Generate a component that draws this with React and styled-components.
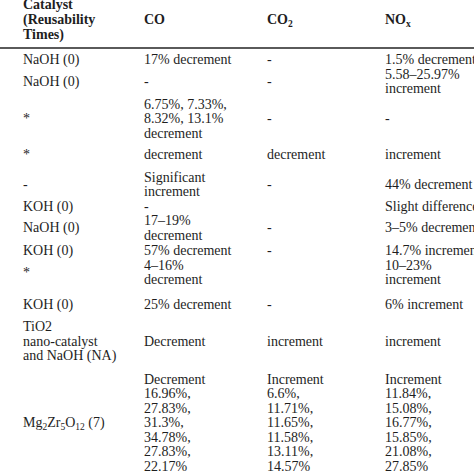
import React from "react";
import styled, { createGlobalStyle } from "styled-components";

const Global = createGlobalStyle`
  html, body {
    margin: 0;
    padding: 0;
    background: #ffffff;
    overflow: hidden;
    width: 474px;
    height: 474px;
  }
  body {
    font-family: "Liberation Serif", "Times New Roman", serif;
    color: #1e1e1e;
  }
`;

const Table = styled.div`
  display: flex;
  flex-direction: column;
  width: 474px;
  height: 474px;
  overflow: hidden;
  font-size: 14px;
  line-height: 14.5px;
`;

const HeaderRow = styled.div`
  display: grid;
  grid-template-columns: 121px 123px 118px auto;
  align-items: center;
  padding: 0 0 5px 23px;
  margin-top: -3px;
  border-bottom: 2px solid #5a5a5a;
  font-weight: bold;
  line-height: 15px;
`;

const Row = styled.div`
  display: grid;
  grid-template-columns: 121px 123px 118px auto;
  align-items: center;
  padding-left: 23px;
  margin-top: ${(p) => p.$gap}px;
`;

const Cell = styled.div`
  white-space: nowrap;
`;

const Line = styled.div`
  white-space: nowrap;
`;

const Sub = styled.sub`
  font-size: 0.68em;
  vertical-align: -0.3em;
  line-height: 0;
`;

const header = [
  ["Catalyst", "(Reusability", "Times)"],
  ["CO"],
  [<>CO<Sub>2</Sub></>],
  [<>NO<Sub>x</Sub></>],
];

const rows = [
  { gap: 4, cells: [["NaOH (0)"], ["17% decrement"], ["-"], ["1.5% decrement"]] },
  { gap: 0, cells: [["NaOH (0)"], ["-"], ["-"], ["5.58–25.97%", "increment"]] },
  { gap: 1, cells: [["*"], ["6.75%, 7.33%,", "8.32%, 13.1%", "decrement"], ["-"], ["-"]] },
  { gap: 7, cells: [["*"], ["decrement"], ["decrement"], ["increment"]] },
  { gap: 8, cells: [["-"], ["Significant", "increment"], ["-"], ["44% decrement"]] },
  { gap: 0, cells: [["KOH (0)"], ["-"], [], ["Slight difference"]] },
  { gap: 0, cells: [["NaOH (0)"], ["17–19%", "decrement"], ["-"], ["3–5% decrement"]] },
  { gap: 1, cells: [["KOH (0)"], ["57% decrement"], ["-"], ["14.7% increment"]] },
  { gap: 0, cells: [["*"], ["4–16%", "decrement"], [], ["10–23%", "increment"]] },
  { gap: 10, cells: [["KOH (0)"], ["25% decrement"], ["-"], ["6% increment"]] },
  {
    gap: 8,
    cells: [["TiO2", "nano-catalyst", "and NaOH (NA)"], ["Decrement"], ["increment"], ["increment"]],
  },
  {
    gap: 9,
    cells: [
      [<>Mg<Sub>2</Sub>Zr<Sub>5</Sub>O<Sub>12</Sub> (7)</>],
      ["Decrement", "16.96%,", "27.83%,", "31.3%,", "34.78%,", "27.83%,", "22.17%"],
      ["Increment", "6.6%,", "11.71%,", "11.65%,", "11.58%,", "13.11%,", "14.57%"],
      ["Increment", "11.84%,", "15.08%,", "16.77%,", "15.85%,", "21.08%,", "27.85%"],
    ],
  },
];

const renderCell = (lines, i) => (
  <Cell key={i}>
    {lines.map((l, j) => (
      <Line key={j}>{l}</Line>
    ))}
  </Cell>
);

export default function App() {
  return (
    <>
      <Global />
      <Table>
        <HeaderRow>{header.map(renderCell)}</HeaderRow>
        {rows.map((r, i) => (
          <Row key={i} $gap={r.gap}>
            {r.cells.map(renderCell)}
          </Row>
        ))}
      </Table>
    </>
  );
}
